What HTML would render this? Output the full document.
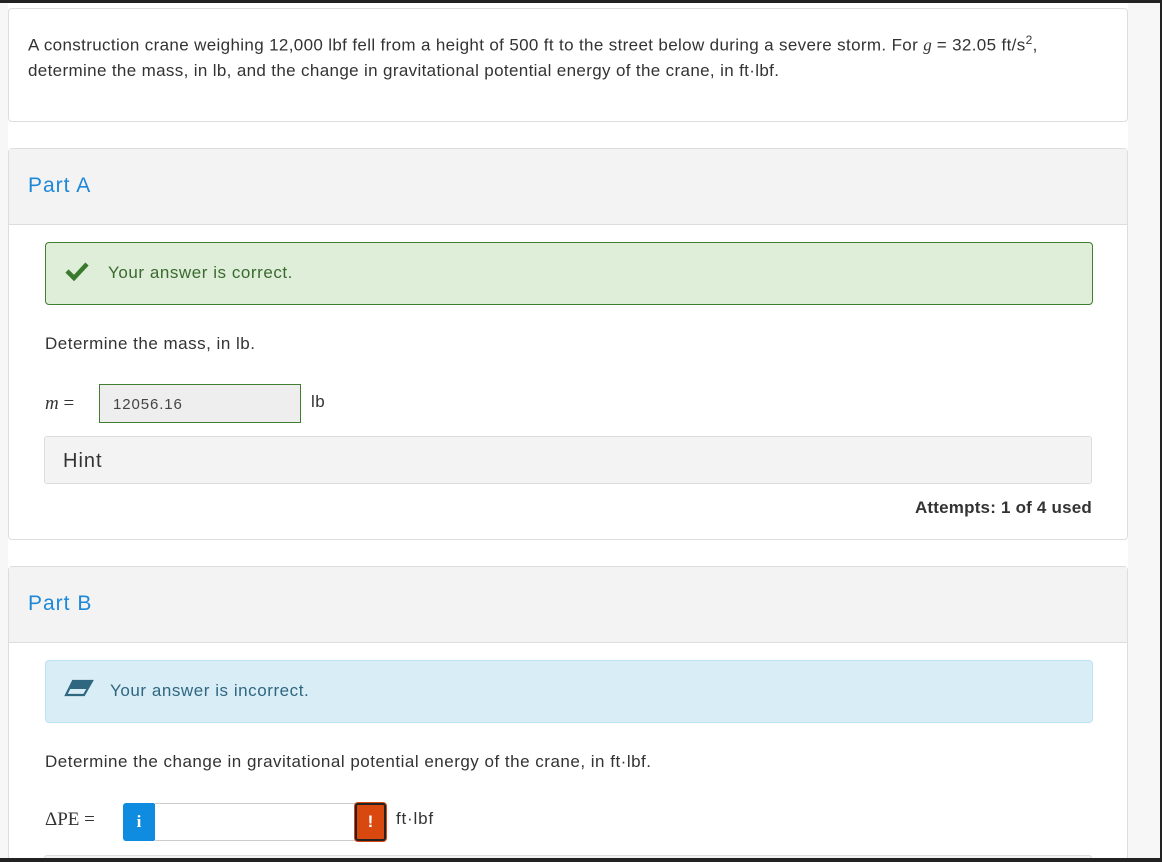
<!DOCTYPE html>
<html><head><meta charset="utf-8"><style>
*{box-sizing:border-box;margin:0;padding:0}
html,body{width:1162px;height:862px;overflow:hidden}
body{background:#f7f7f7;font-family:"Liberation Sans",sans-serif;color:#333;position:relative}
.topbar{position:absolute;left:0;top:0;width:1162px;height:3px;background:#222}
.botbar{position:absolute;left:0;top:858px;width:1162px;height:4px;background:#222}
.rbar{position:absolute;left:1160px;top:0;width:2px;height:862px;background:#222}
.main{position:absolute;left:8px;top:3px;width:1120px;height:855px;background:#fff}
.card{position:absolute;left:8px;width:1120px;border:1px solid #ddd;border-radius:4px;background:#fff}
.c1{top:8px;height:114px}
.c1 p{position:absolute;left:19px;top:19px;font-size:17px;line-height:25px;color:#333;letter-spacing:0.35px;width:1090px}
.hdr{position:absolute;left:0;top:0;width:100%;height:76px;background:#f3f3f3;border-bottom:1px solid #ddd}
.hdr span{position:absolute;left:19px;top:25px;font-size:21px;color:#1e88d8;letter-spacing:1px}
.fb{position:absolute;left:36px;width:1048px;height:63px;border-radius:4px}
.ok{background:#dfeed8;border:1px solid #3f7f2f}
.bad{background:#d9edf7;border:1px solid #bce3f1}
.fb span{position:absolute;left:62px;top:20px;font-size:17px;letter-spacing:0.55px}
.q{position:absolute;left:36px;font-size:17px;letter-spacing:0.5px;color:#333}
.math{font-family:"Liberation Serif",serif;font-size:19px;letter-spacing:0}
</style></head><body>
<div class="main"></div>
<div class="topbar"></div><div class="rbar"></div>
<div class="card c1"><p>A construction crane weighing 12,000 lbf fell from a height of 500 ft to the street below during a severe storm. For <i class="math" style="font-size:17px">g</i> = 32.05 ft/s<sup style="font-size:12px">2</sup>,<br>determine the mass, in lb, and the change in gravitational potential energy of the crane, in ft·lbf.</p></div>

<div class="card" style="top:148px;height:392px">
 <div class="hdr"><span>Part A</span></div>
 <div class="fb ok" style="top:93px">
  <svg style="position:absolute;left:19px;top:18px" width="24" height="20" viewBox="0 0 24 20"><path d="M2 10 L9 17 L22 3" fill="none" stroke="#3a7a2d" stroke-width="4.5"/></svg>
  <span style="color:#3a6a2f">Your answer is correct.</span></div>
 <div class="q" style="top:185px">Determine the mass, in lb.</div>
 <div class="q math" style="top:244px;font-style:italic">m <span style="font-style:normal">=</span></div>
 <div style="position:absolute;left:90px;top:235px;width:202px;height:39px;background:#eee;border:1px solid #3f7f2f"><span style="position:absolute;left:13px;top:11px;font-size:15px;color:#444;letter-spacing:0.9px">12056.16</span></div>
 <div style="position:absolute;left:302px;top:243px;font-size:17px;letter-spacing:0.5px">lb</div>
 <div style="position:absolute;left:35px;top:287px;width:1048px;height:48px;background:#f3f3f3;border:1px solid #ddd;border-radius:3px"><span style="position:absolute;left:18px;top:13px;font-size:20px;letter-spacing:1px">Hint</span></div>
 <div style="position:absolute;right:35px;top:349px;font-size:17px;font-weight:bold;color:#333;letter-spacing:0.2px">Attempts: 1 of 4 used</div>
</div>

<div class="card" style="top:566px;height:300px">
 <div class="hdr"><span>Part B</span></div>
 <div class="fb bad" style="top:93px">
  <svg style="position:absolute;left:18px;top:18px" width="30" height="20" viewBox="0 0 30 20"><path d="M9 2 L28 2 L20 16 L2 16 Z" fill="none" stroke="#2f6680" stroke-width="2.2"/><path d="M9 2 L28 2 L23 10 L5 10 Z" fill="#2f6680"/></svg>
  <span style="color:#2f6680;left:64px">Your answer is incorrect.</span></div>
 <div class="q" style="top:185px">Determine the change in gravitational potential energy of the crane, in ft·lbf.</div>
 <div class="q math" style="top:242px">ΔPE =</div>
 <div style="position:absolute;left:114px;top:236px;width:32px;height:38px;background:#0f8be0;border-radius:3px 0 0 3px;color:#fff;font-family:'Liberation Serif',serif;font-weight:bold;font-size:17px;text-align:center;line-height:38px">i</div>
 <div style="position:absolute;left:145px;top:236px;width:202px;height:38px;border:1px solid #ccc;border-left:none"></div>
 <div style="position:absolute;left:346px;top:236px;width:31px;height:38px;background:#d9480f;border:2px solid #222;box-shadow:0 0 0 1px #d9480f;border-radius:3px;color:#fff;font-weight:bold;font-size:17px;text-align:center;line-height:34px">!</div>
 <div style="position:absolute;left:387px;top:242px;font-size:17px;letter-spacing:0.8px">ft·lbf</div>
 <div style="position:absolute;left:35px;top:288px;width:1048px;height:20px;background:#f3f3f3;border:1px solid #ddd;border-radius:3px"></div>
</div>
<div class="botbar"></div>
</body></html>
